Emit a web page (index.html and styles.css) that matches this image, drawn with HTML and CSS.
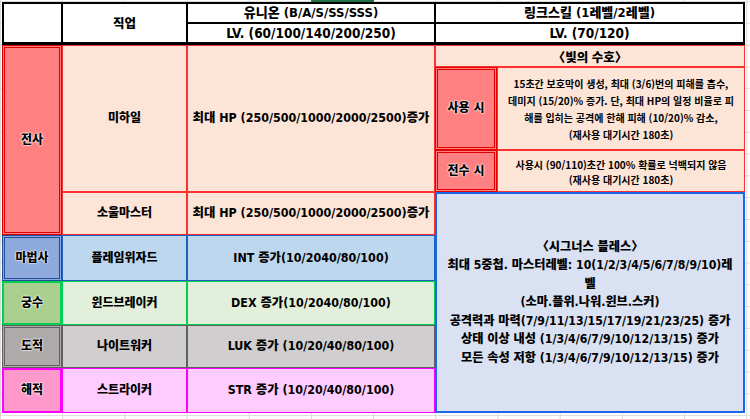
FILE: index.html
```html
<!DOCTYPE html>
<html lang="ko">
<head>
<meta charset="utf-8">
<link rel="stylesheet" href="styles.css">
</head>
<body>
<div class="sheet">
  <div class="sel-bar"></div>
  <div class="table">
    <div class="cell hd h-a"></div>
    <div class="cell hd h-b">직업</div>
    <div class="cell hd h-c1">유니온 (B/A/S/SS/SSS)</div>
    <div class="cell hd h-d1">링크스킬 (1레벨/2레벨)</div>
    <div class="cell hd h-c2">LV. (60/100/140/200/250)</div>
    <div class="cell hd h-d2">LV. (70/120)</div>

    <div class="cell cat war-cat">전사</div>
    <div class="cell war job-mihile">미하일</div>
    <div class="cell war stat stat-mihile">최대 HP (250/500/1000/2000/2500)증가</div>
    <div class="cell war link-title">〈빛의 수호〉</div>
    <div class="cell use use-1">사용 시</div>
    <div class="cell war para para-1">15초간 보호막이 생성, 최대 (3/6)번의 피해를 흡수,<br>데미지 (15/20)% 증가. 단, 최대 HP의 일정 비율로 피<br>해를 입히는 공격에 한해 피해 (10/20)% 감소,<br>(재사용 대기시간 180초)</div>
    <div class="cell use use-2">전수 시</div>
    <div class="cell war para para-2">사용시 (90/110)초간 100% 확률로 넉백되지 않음<br>(재사용 대기시간 180초)</div>
    <div class="cell war job-soul">소울마스터</div>
    <div class="cell war stat stat-soul">최대 HP (250/500/1000/2000/2500)증가</div>

    <div class="cell bless">〈시그너스 블레스〉<br>최대 5중첩. 마스터레벨: 10(1/2/3/4/5/6/7/8/9/10)레<br>벨<br>(소마.플위.나워.윈브.스커)<br>공격력과 마력(7/9/11/13/15/17/19/21/23/25) 증가<br>상태 이상 내성 (1/3/4/6/7/9/10/12/13/15) 증가<br>모든 속성 저항 (1/3/4/6/7/9/10/12/13/15) 증가</div>

    <div class="cell cat mage-cat r7">마법사</div>
    <div class="cell mage r7">플레임위자드</div>
    <div class="cell mage stat r7">INT 증가(10/2040/80/100)</div>

    <div class="cell cat bow-cat r8">궁수</div>
    <div class="cell bow r8">윈드브레이커</div>
    <div class="cell bow stat r8">DEX 증가(10/2040/80/100)</div>

    <div class="cell cat thief-cat r9">도적</div>
    <div class="cell thief r9">나이트워커</div>
    <div class="cell thief stat r9">LUK 증가 (10/20/40/80/100)</div>

    <div class="cell cat pirate-cat r10">해적</div>
    <div class="cell pirate r10">스트라이커</div>
    <div class="cell pirate stat r10">STR 증가 (10/20/40/80/100)</div>
  </div>
</div>
</body>
</html>
```
FILE: styles.css
```css
* { box-sizing: border-box; }
html, body { margin: 0; padding: 0; }
body {
  width: 750px;
  height: 419px;
  overflow: hidden;
  background-color: #fff;
  background-image:
    linear-gradient(to right, #dadada 1px, transparent 1px),
    linear-gradient(to bottom, #dadada 1px, transparent 1px);
  background-size: 62.2px 100%, 100% 21.8px;
  background-position: 0 0, 0 1px;
  font-family: "DejaVu Sans Condensed", "DejaVu Sans", "Noto Sans CJK KR", sans-serif;
  font-stretch: condensed;
  font-weight: 900;
  color: #000;
}
.sheet {
  position: relative;
  padding: 2px 0 0 2px;
}
.sel-bar {
  position: absolute;
  top: 0;
  left: 311px;
  width: 63px;
  height: 2px;
  background: #217346;
}
.table {
  display: grid;
  grid-template-columns: 60px 125px 248px 62px 248px;
  grid-template-rows: 21px 22px 22px 83px 42px 43px 46px 44px 43px 45px;
  font-size: 12px;
  line-height: 1.2;
}
.cell {
  display: flex;
  align-items: center;
  justify-content: center;
  text-align: center;
  white-space: nowrap;
  overflow: visible;
}

/* header */
.hd { background: #fff; border: 1px solid #000; font-size: 13px; }
.h-a { grid-row: 1 / 3; grid-column: 1; border-width: 2px 1px 3px 2px; }
.h-b { grid-row: 1 / 3; grid-column: 2; border-width: 2px 1px 3px 1px; font-size: 12.5px; }
.h-c1 { grid-row: 1; grid-column: 3; border-width: 2px 1px 1px 1px; }
.h-d1 { grid-row: 1; grid-column: 4 / 6; border-width: 2px 2px 1px 1px; }
.h-c2 { grid-row: 2; grid-column: 3; border-width: 1px 1px 3px 1px; font-size: 13.5px; }
.h-d2 { grid-row: 2; grid-column: 4 / 6; border-width: 1px 2px 3px 1px; font-size: 13.5px; }

/* category cells */
.cat {
  grid-column: 1;
  border: 3px double;
  text-shadow: 0 0 1px #fff, 0 0 2px #fff, 0 0 2px #fff;
}
.war-cat { grid-row: 3 / 7; background: #ff8080; border-color: #e00000; }

/* warrior rows */
.war { background: #fce4d6; border: 1px solid #ff3030; }
.stat { font-size: 12.4px; }
.job-mihile { grid-row: 3 / 6; grid-column: 2; }
.stat-mihile { grid-row: 3 / 6; grid-column: 3; }
.job-soul { grid-row: 6; grid-column: 2; }
.stat-soul { grid-row: 6; grid-column: 3; }
.link-title { grid-row: 3; grid-column: 4 / 6; font-family: "Noto Sans CJK KR", sans-serif; font-size: 12.5px; }
.use {
  grid-column: 4;
  background: #ff8080;
  border: 3px double #e00000;
  text-shadow: 0 0 1px #fff, 0 0 2px #fff, 0 0 2px #fff;
}
.use-1 { grid-row: 4; }
.use-2 { grid-row: 5; }
.para {
  grid-column: 5;
  font-family: "Noto Sans CJK KR", sans-serif;
  font-weight: 700;
  font-size: 10px;
  line-height: 17px;
  padding-top: 1px;
}
.para-1 { grid-row: 4; }
.para-2 { grid-row: 5; line-height: 15px; }

/* cygnus bless */
.bless {
  grid-row: 6 / 11;
  grid-column: 4 / 6;
  background: #d9e1f2;
  border: 2px solid #1a66e6;
  font-size: 12.2px;
  line-height: 18.5px;
}

/* other rows */
.r7 { grid-row: 7; }
.r8 { grid-row: 8; }
.r9 { grid-row: 9; }
.r10 { grid-row: 10; }
.mage-cat { background: #8ea9db; border-color: #1f4e9a; }
.mage { background: #bdd7ee; border: 1px solid #2060c0; }
.bow-cat { background: #a9d08e; border: 2px solid #00d050; }
.bow { background: #e2efda; border: 1px solid #00d050; }
.thief-cat { background: #aeaaaa; border-color: #606060; }
.thief { background: #d0cece; border: 1px solid #606060; }
.pirate-cat { background: #ff99cc; border: 2px solid #ff00ff; }
.pirate { background: #ffccff; border: 1px solid #ff00ff; }
```
